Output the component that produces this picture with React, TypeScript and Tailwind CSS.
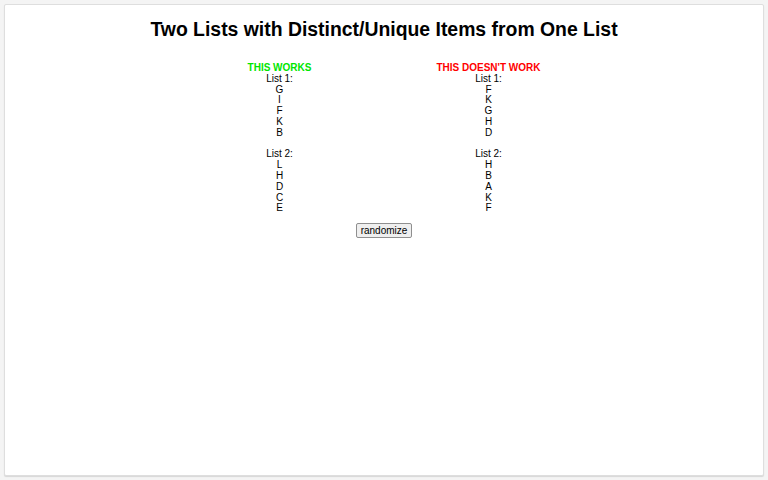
import React from "react";

const left1 = ["G", "I", "F", "K", "B"];
const left2 = ["L", "H", "D", "C", "E"];
const right1 = ["F", "K", "G", "H", "D"];
const right2 = ["H", "B", "A", "K", "F"];

function Col({ title, color, l1, l2 }: { title: string; color: string; l1: string[]; l2: string[] }) {
  return (
    <div className="flex flex-col items-center text-[10px] leading-[10.8px] text-black">
      <div className={`font-bold text-[10px] ${color}`}>{title}</div>
      <div>List 1:</div>
      {l1.map((x, i) => (
        <div key={"a" + i}>{x}</div>
      ))}
      <div className="h-[10.8px]" />
      <div>List 2:</div>
      {l2.map((x, i) => (
        <div key={"b" + i}>{x}</div>
      ))}
    </div>
  );
}

export default function App() {
  return (
    <div className="w-[768px] h-[480px] bg-[#f4f4f4] p-[4px] font-['Liberation_Sans',Arial,sans-serif]">
      <div className="h-full bg-white border border-[#dedede] rounded-[2px] shadow-[0_1px_1px_rgba(0,0,0,0.12)] flex flex-col items-center">
        <h1 className="mt-[13px] text-[19.4px] leading-[23px] font-bold text-black">
          Two Lists with Distinct/Unique Items from One List
        </h1>
        <div className="mt-[22px] grid grid-cols-[209px_209px]">
          <Col title="THIS WORKS" color="text-[#00e600]" l1={left1} l2={left2} />
          <Col title="THIS DOESN'T WORK" color="text-[#ff0000]" l1={right1} l2={right2} />
        </div>
        <button className="mt-[9px] h-[15px] px-[4px] text-[10px] leading-[13px] text-black bg-[#efefef] border border-[#8f8f8f] rounded-[2px]">
          randomize
        </button>
      </div>
    </div>
  );
}
